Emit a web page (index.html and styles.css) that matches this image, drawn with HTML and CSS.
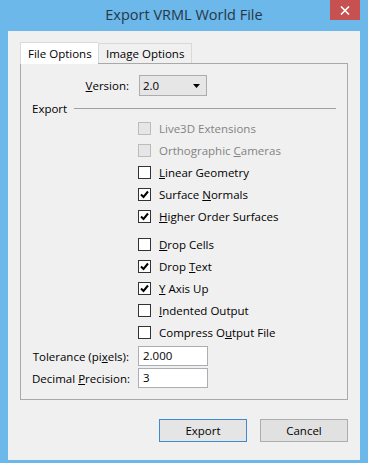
FILE: index.html
```html
<!DOCTYPE html>
<html lang="en">
<head>
    <meta charset="UTF-8">
    <meta name="viewport" content="width=device-width, initial-scale=1.0">
    <title>Export VRML World File</title>
    <link rel="stylesheet" href="styles.css">
</head>
<body>
    <div class="window">
        <div class="titlebar">
            <span></span>
            <div class="title">Export VRML World File</div>
            <div class="close">
                <svg width="10" height="9" viewBox="0 0 10 9"><path d="M1 0.5 L9 8.5 M9 0.5 L1 8.5" stroke="#fff" stroke-width="1.6"/></svg>
            </div>
        </div>

        <div class="client">
            <div class="tabs">
                <div class="tab active">File Options</div>
                <div class="tab">Image Options</div>
            </div>

            <div class="panel">
                <div class="field version-row">
                    <label><u>V</u>ersion:</label>
                    <div class="select">
                        <span>2.0</span>
                        <svg width="7" height="4" viewBox="0 0 7 4"><path d="M0 0 H7 L3.5 4 Z" fill="#000"/></svg>
                    </div>
                </div>

                <div class="group-head">
                    <span>Export</span>
                    <div class="group-line"></div>
                </div>

                <div class="checks">
                    <div class="check disabled"><span class="box"></span><span>Live3D Extensions</span></div>
                    <div class="check disabled"><span class="box"></span><span>Orthographic <u>C</u>ameras</span></div>
                    <div class="check"><span class="box"></span><span><u>L</u>inear Geometry</span></div>
                    <div class="check"><span class="box on"></span><span>Surface <u>N</u>ormals</span></div>
                    <div class="check"><span class="box on"></span><span><u>H</u>igher Order Surfaces</span></div>
                    <div class="check spaced"><span class="box"></span><span><u>D</u>rop Cells</span></div>
                    <div class="check"><span class="box on"></span><span>Drop <u>T</u>ext</span></div>
                    <div class="check"><span class="box on"></span><span><u>Y</u> Axis Up</span></div>
                    <div class="check"><span class="box"></span><span><u>I</u>ndented Output</span></div>
                    <div class="check"><span class="box"></span><span>Compress O<u>u</u>tput File</span></div>
                </div>

                <div class="field tol-row">
                    <label>Tolerance (pi<u>x</u>els):</label>
                    <div class="edit">2.000</div>
                </div>
                <div class="field prec-row">
                    <label>Decimal <u>P</u>recision:</label>
                    <div class="edit">3</div>
                </div>
            </div>

            <div class="buttons">
                <button class="default">Export</button>
                <button>Cancel</button>
            </div>
        </div>
    </div>

    <script>
        // check marks for the ticked boxes
        document.querySelectorAll('.box.on').forEach(box => {
            box.innerHTML = '<svg width="11" height="11" viewBox="0 0 11 11"><path d="M2 5.5 L4.5 8 L9 2.5" fill="none" stroke="#000" stroke-width="2"/></svg>';
        });
    </script>
</body>
</html>
```

FILE: styles.css
```css
body {
    margin: 0;
    padding: 0;
    font-family: 'Open Sans', 'Noto Sans', sans-serif;
    font-size: 11.5px;
    color: #000;
    background: #6cb8ea;
    width: 368px;
    height: 463px;
    overflow: hidden;
}

.window {
    display: flex;
    flex-direction: column;
    height: 463px;
}

.titlebar {
    height: 31px;
    display: grid;
    grid-template-columns: 1fr auto 1fr;
}

.title {
    font-size: 14.5px;
    color: #263746;
    line-height: 30px;
}

.close {
    justify-self: end;
    width: 30px;
    height: 20px;
    margin-right: 8px;
    background: #c75050;
    display: flex;
    justify-content: center;
    align-items: center;
}

.client {
    margin: 0 8px;
    height: 429px;
    background: #f0f0f0;
    padding: 11px 12px 0 12px;
    box-sizing: border-box;
}

.tabs {
    display: flex;
    align-items: flex-end;
    height: 21px;
}

.tab {
    height: 20px;
    line-height: 19px;
    padding: 0 0 0 7px;
    border: 1px solid #d9d9d9;
    border-bottom: none;
    box-sizing: border-box;
    background: #f0f0f0;
    width: 94px;
    white-space: nowrap;
}

.tab.active {
    height: 22px;
    width: 78px;
    margin-bottom: -1px;
    background: #fff;
    position: relative;
    z-index: 1;
    line-height: 21px;
    border-right: none;
}

.panel {
    border: 1px solid #a9a9a9;
    height: 337px;
    box-sizing: border-box;
    padding: 11px 11px 0 11px;
}

.field {
    display: grid;
    grid-template-columns: 97px auto;
    column-gap: 9px;
    align-items: center;
}

.field label {
    text-align: right;
    white-space: nowrap;
}

.select {
    width: 68px;
    height: 21px;
    box-sizing: border-box;
    border: 1px solid #acacac;
    background: #e6e6e6;
    display: flex;
    align-items: center;
    justify-content: space-between;
    padding: 0 6px 0 3px;
    margin-left: 1px;
}

.group-head {
    display: flex;
    align-items: center;
    height: 16px;
    margin-top: 4px;
}

.group-line {
    flex: 1;
    height: 1px;
    background: #a0a0a0;
    margin-left: 7px;
}

.checks {
    margin-top: 1px;
    padding-left: 106px;
}

.check {
    height: 22px;
    display: flex;
    align-items: center;
    white-space: nowrap;
}

.check.spaced {
    margin-top: 6px;
}

.check.disabled {
    color: #838383;
}

.box {
    width: 13px;
    height: 13px;
    box-sizing: border-box;
    border: 1px solid #333;
    background: #fff;
    margin-right: 8px;
    display: flex;
    align-items: center;
    justify-content: center;
}

.disabled .box {
    border-color: #bcbcbc;
    background: #e6e6e6;
}

.tol-row {
    margin-top: 3px;
}

.prec-row {
    margin-top: 2px;
}

.edit {
    width: 70px;
    height: 20px;
    box-sizing: border-box;
    border: 1px solid #abadb3;
    background: #fff;
    padding-left: 4px;
    line-height: 18px;
}

.buttons {
    display: flex;
    justify-content: flex-end;
    gap: 13px;
    margin-top: 19px;
}

button {
    width: 88px;
    height: 23px;
    font-family: inherit;
    font-size: inherit;
    color: #000;
    background: #e1e1e1;
    border: 1px solid #adadad;
    padding: 0;
}

button.default {
    border-color: #3c8bd0;
    background: #e5e5e5;
}
```
